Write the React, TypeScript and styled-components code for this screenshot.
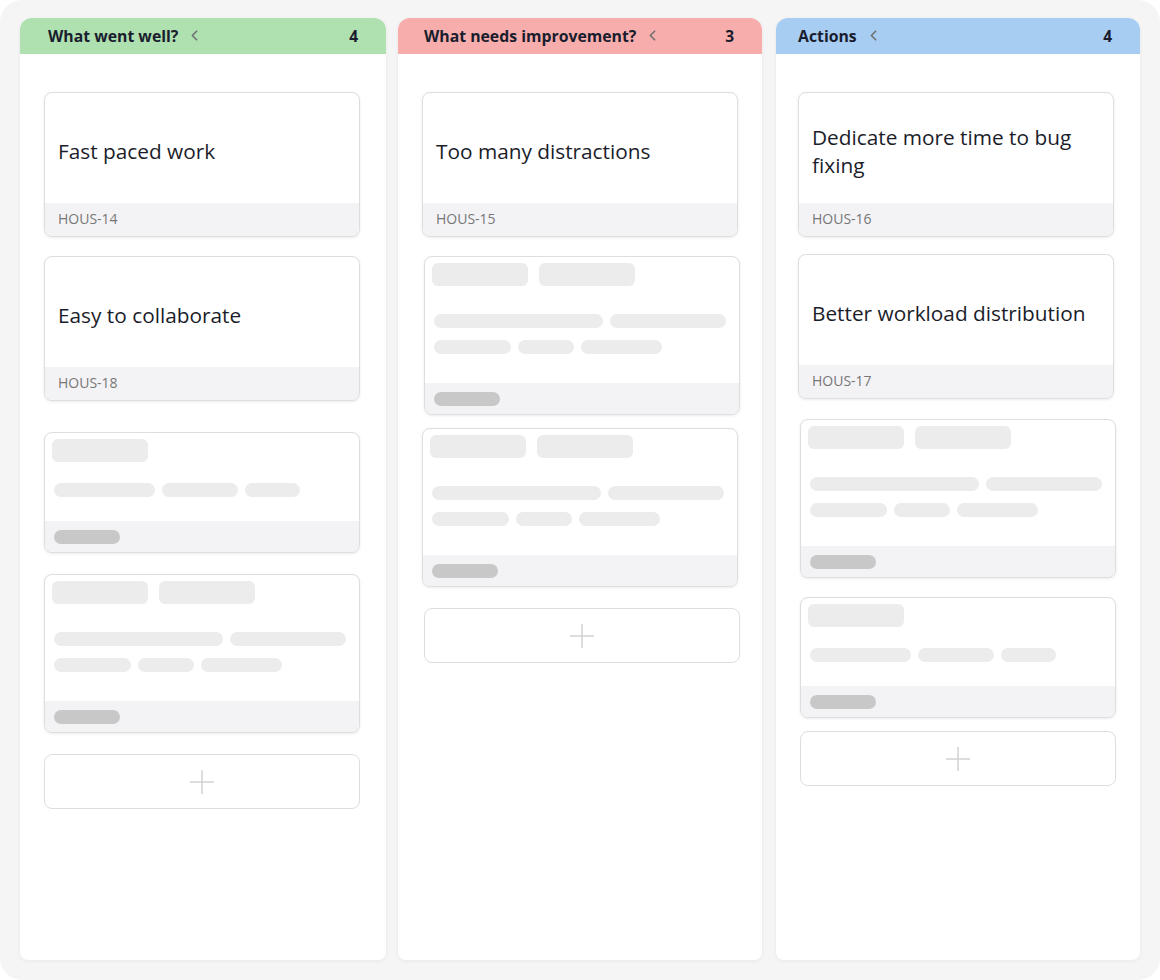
import React from 'react';
import styled, { createGlobalStyle } from 'styled-components';
import { ChevronLeft } from 'lucide-react';

const GlobalStyle = createGlobalStyle`
  html, body {
    margin: 0;
    padding: 0;
    background: #ffffff;
  }
  body {
    font-family: 'Open Sans', 'Noto Sans', sans-serif;
  }
`;

const Board = styled.div`
  width: 1160px;
  height: 980px;
  box-sizing: border-box;
  background: #f5f5f5;
  border-radius: 22px;
  padding: 18px 20px 20px;
  display: flex;
  align-items: stretch;
`;

const Column = styled.div<{ $width: number; $gap: number }>`
  width: ${p => p.$width}px;
  margin-left: ${p => p.$gap}px;
  flex-shrink: 0;
  background: #ffffff;
  border-radius: 12px 12px 8px 8px;
  box-shadow: 0 1px 4px rgba(0, 0, 0, 0.06);
  display: flex;
  flex-direction: column;
`;

const Header = styled.div<{ $color: string; $pad: number }>`
  height: 36px;
  background: ${p => p.$color};
  border-radius: 12px 12px 0 0;
  display: flex;
  align-items: center;
  padding: 0 28px 1px ${p => p.$pad}px;
  box-sizing: border-box;
`;

const HeaderTitle = styled.span`
  font-size: 15.8px;
  font-weight: 700;
  color: #1a1d2e;
`;

const Chevron = styled.span`
  display: inline-flex;
  margin-left: 8px;
  color: #727272;
`;

const Count = styled.span`
  margin-left: auto;
  font-size: 15.5px;
  font-weight: 700;
  color: #1a1d2e;
`;

const ColumnBody = styled.div<{ $pad: number }>`
  display: flex;
  flex-direction: column;
  padding: 0 0 0 ${p => p.$pad}px;
`;

const Slot = styled.div<{ $top: number; $shift?: number }>`
  margin-top: ${p => p.$top}px;
  margin-left: ${p => p.$shift || 0}px;
  width: 316px;
`;

const Card = styled.div`
  box-sizing: border-box;
  border: 1.5px solid #dedede;
  border-radius: 8px;
  background: #ffffff;
  box-shadow: 0 1px 3px rgba(0, 0, 0, 0.08);
  overflow: hidden;
  display: flex;
  flex-direction: column;
`;

const CardText = styled.div`
  height: 110px;
  box-sizing: border-box;
  display: flex;
  align-items: center;
  padding: 6px 8px 0 13px;
  font-size: 20.8px;
  font-weight: 500;
  line-height: 28px;
  color: #1b1d2a;
`;

const CardFooter = styled.div<{ $h: number }>`
  height: ${p => p.$h}px;
  box-sizing: border-box;
  background: #f3f3f5;
  display: flex;
  align-items: center;
  padding: 0 0 3px 13px;
  font-size: 14px;
  color: #777777;
`;

const SkelBody = styled.div<{ $h: number }>`
  height: ${p => p.$h}px;
  box-sizing: border-box;
  padding: 6px 7px 0;
`;

const PillRow = styled.div`
  display: flex;
  gap: 11px;
`;

const TitlePill = styled.div`
  width: 96px;
  height: 23px;
  border-radius: 6px;
  background: #ececec;
`;

const LineRow = styled.div<{ $top: number }>`
  display: flex;
  gap: 7px;
  margin-top: ${p => p.$top}px;
  padding-left: 2px;
`;

const LinePill = styled.div<{ $w: number }>`
  width: ${p => p.$w}px;
  height: 14px;
  border-radius: 7px;
  background: #ececec;
`;

const FooterPill = styled.div`
  width: 66px;
  height: 14px;
  border-radius: 7px;
  background: #c8c8c8;
  margin-left: -4px;
  margin-top: 3px;
`;

const AddButton = styled.div`
  box-sizing: border-box;
  height: 55px;
  border: 1.5px solid #dedede;
  border-radius: 8px;
  background: #ffffff;
  display: flex;
  align-items: center;
  justify-content: center;
`;

type TextCardData = { kind: 'text'; top: number; shift?: number; text: string; id: string; footer?: number };
type SkelCardData = { kind: 'skel'; top: number; shift?: number; pills: number; rows: number[][]; body: number; gap: number };
type AddData = { kind: 'add'; top: number; shift?: number };
type Item = TextCardData | SkelCardData | AddData;

type ColumnData = {
  title: string;
  count: number;
  color: string;
  width: number;
  gap: number;
  headPad: number;
  bodyPad: number;
  items: Item[];
};

const short = [[101, 76, 55]];
const long = [[169, 116], [77, 56, 81]];

const columns: ColumnData[] = [
  {
    title: 'What went well?',
    count: 4,
    color: '#aee0b0',
    width: 366,
    gap: 0,
    headPad: 28,
    bodyPad: 24,
    items: [
      { kind: 'text', top: 38, text: 'Fast paced work', id: 'HOUS-14' },
      { kind: 'text', top: 19, text: 'Easy to collaborate', id: 'HOUS-18' },
      { kind: 'skel', top: 31, pills: 1, rows: short, body: 88, gap: 21 },
      { kind: 'skel', top: 21, pills: 2, rows: long, body: 126, gap: 28 },
      { kind: 'add', top: 21 },
    ],
  },
  {
    title: 'What needs improvement?',
    count: 3,
    color: '#f7adab',
    width: 364,
    gap: 12,
    headPad: 26,
    bodyPad: 24,
    items: [
      { kind: 'text', top: 38, text: 'Too many distractions', id: 'HOUS-15' },
      { kind: 'skel', top: 19, shift: 2, pills: 2, rows: long, body: 126, gap: 28 },
      { kind: 'skel', top: 13, pills: 2, rows: long, body: 126, gap: 28 },
      { kind: 'add', top: 21, shift: 2 },
    ],
  },
  {
    title: 'Actions',
    count: 4,
    color: '#a8cdf3',
    width: 364,
    gap: 14,
    headPad: 22,
    bodyPad: 22,
    items: [
      { kind: 'text', top: 38, text: 'Dedicate more time to bug fixing', id: 'HOUS-16' },
      { kind: 'text', top: 17, text: 'Better workload distribution', id: 'HOUS-17', footer: 33 },
      { kind: 'skel', top: 20, shift: 2, pills: 2, rows: long, body: 126, gap: 28 },
      { kind: 'skel', top: 19, shift: 2, pills: 1, rows: short, body: 88, gap: 21 },
      { kind: 'add', top: 13, shift: 2 },
    ],
  },
];

const PlusIcon: React.FC = () => (
  <svg width="24" height="26" viewBox="0 0 24 26">
    <line x1="12" y1="1" x2="12" y2="25" stroke="#d2d2d2" strokeWidth="1.5" />
    <line x1="0" y1="13" x2="24" y2="13" stroke="#d2d2d2" strokeWidth="1.5" />
  </svg>
);

const renderItem = (item: Item, index: number) => {
  if (item.kind === 'text') {
    return (
      <Slot key={index} $top={item.top} $shift={item.shift}>
        <Card>
          <CardText>{item.text}</CardText>
          <CardFooter $h={item.footer || 33}>{item.id}</CardFooter>
        </Card>
      </Slot>
    );
  }
  if (item.kind === 'skel') {
    return (
      <Slot key={index} $top={item.top} $shift={item.shift}>
        <Card>
          <SkelBody $h={item.body}>
            <PillRow>
              {Array.from({ length: item.pills }).map((_, i) => (
                <TitlePill key={i} />
              ))}
            </PillRow>
            {item.rows.map((row, r) => (
              <LineRow key={r} $top={r === 0 ? item.gap : 12}>
                {row.map((w, i) => (
                  <LinePill key={i} $w={w} />
                ))}
              </LineRow>
            ))}
          </SkelBody>
          <CardFooter $h={31}>
            <FooterPill />
          </CardFooter>
        </Card>
      </Slot>
    );
  }
  return (
    <Slot key={index} $top={item.top} $shift={item.shift}>
      <AddButton>
        <PlusIcon />
      </AddButton>
    </Slot>
  );
};

const App: React.FC = () => {
  return (
    <>
      <GlobalStyle />
      <Board>
        {columns.map(col => (
          <Column key={col.title} $width={col.width} $gap={col.gap}>
            <Header $color={col.color} $pad={col.headPad}>
              <HeaderTitle>{col.title}</HeaderTitle>
              <Chevron>
                <ChevronLeft size={17} strokeWidth={2.4} />
              </Chevron>
              <Count>{col.count}</Count>
            </Header>
            <ColumnBody $pad={col.bodyPad}>{col.items.map(renderItem)}</ColumnBody>
          </Column>
        ))}
      </Board>
    </>
  );
};

export default App;
